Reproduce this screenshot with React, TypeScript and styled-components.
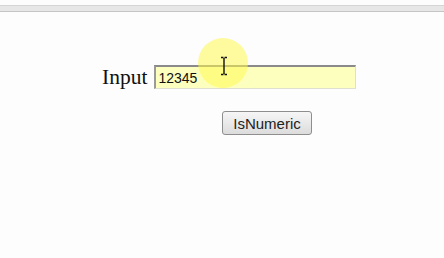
import React from 'react'
import styled, { createGlobalStyle } from 'styled-components'

const GlobalStyle = createGlobalStyle`
	html, body {
		margin: 0;
		padding: 0;
		background: #fcfdfc;
	}
	body {
		width: 444px;
		height: 258px;
		overflow: hidden;
		font-family: 'Liberation Serif', 'Times New Roman', serif;
	}
`

const Page = styled.div`
	position: relative;
	width: 444px;
	height: 258px;
	padding-top: 5px;
	box-sizing: border-box;
`

const TopBar = styled.div`
	height: 5px;
	background: #e6e7e6;
	border-top: 1px solid #d4d5d4;
	border-bottom: 1px solid #c4c5c4;
`

const Form = styled.div`
	display: flex;
	flex-direction: column;
	padding: 53px 0 0 102px;
`

const Row = styled.div`
	display: flex;
	align-items: center;
	gap: 7px;
`

const Label = styled.label`
	font-family: 'Liberation Serif', 'Times New Roman', serif;
	font-size: 21.5px;
	color: #111;
	line-height: 24px;
`

const TextInput = styled.input`
	box-sizing: border-box;
	width: 202px;
	height: 24px;
	padding: 0 2px;
	background: #fdffbf;
	border-style: solid;
	border-width: 2px 1px 1px 2px;
	border-color: #8a8a8a #e0e0d0 #e0e0d0 #9a9a9a;
	font-family: 'Liberation Sans', Arial, sans-serif;
	font-size: 14px;
	color: #111;
	outline: none;
`

const Button = styled.button`
	box-sizing: border-box;
	margin: 22px 0 0 120px;
	width: 90px;
	height: 24px;
	padding: 0;
	background: linear-gradient(#f6f6f6, #dcdcdc);
	border: 1px solid #8e8e8e;
	border-radius: 3px;
	font-family: 'Liberation Sans', Arial, sans-serif;
	font-size: 15px;
	color: #222;
`

const Highlight = styled.div`
	position: absolute;
	left: 198px;
	top: 38px;
	width: 50px;
	height: 50px;
	border-radius: 50%;
	background: rgba(255, 250, 80, 0.55);
	pointer-events: none;
`

const Cursor = styled.svg`
	position: absolute;
	left: 219px;
	top: 56px;
	pointer-events: none;
`

const App = () => (
	<>
		<GlobalStyle />
		<Page>
			<TopBar />
			<Form>
				<Row>
					<Label>Input</Label>
					<TextInput defaultValue="12345" />
				</Row>
				<Button>IsNumeric</Button>
			</Form>
			<Highlight />
			<Cursor width="10" height="20" viewBox="0 0 10 20">
				<path d="M2 1.5h2.5M5.5 1.5H8M5 2v16M2 18.5h2.5M5.5 18.5H8" stroke="#111" strokeWidth="1.4" fill="none" />
			</Cursor>
		</Page>
	</>
)

export default App
